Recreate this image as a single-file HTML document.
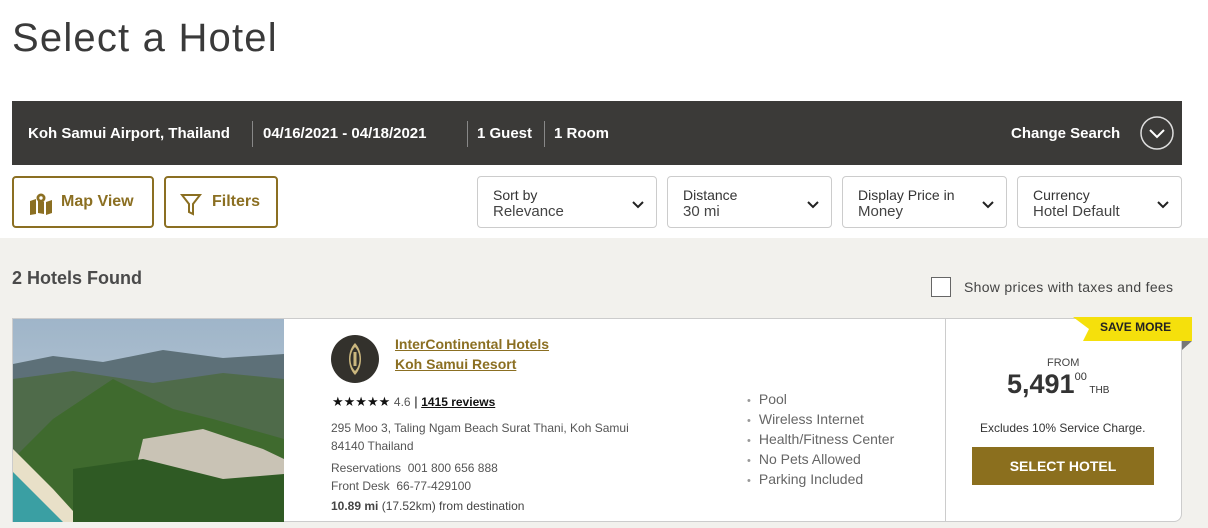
<!DOCTYPE html><html><head><style>
*{margin:0;padding:0;box-sizing:border-box}
body{width:1208px;height:528px;overflow:hidden;background:#fff;font-family:"Liberation Sans",sans-serif;color:#333;position:relative}
.a{position:absolute}
h1{position:absolute;left:12px;top:16px;font-size:40px;font-weight:400;color:#3a3a3a;letter-spacing:1.2px}
.bar{left:12px;top:101px;width:1170px;height:64px;background:#3b3a38;color:#fff;font-size:15px;font-weight:bold}
.bar span{position:absolute;top:24px}
.sep{position:absolute;top:20px;width:1px;height:26px;background:#888}
.btn{top:176px;height:52px;border:2px solid #8b6f22;border-radius:4px;color:#8b6f22;font-weight:bold;font-size:16px}
.sel{top:176px;height:52px;border:1px solid #ccc;border-radius:4px;background:#fff}
.sel b{position:absolute;left:15px;top:10px;font-size:14px;font-weight:normal;color:#333}
.sel i{position:absolute;left:15px;top:26px;font-size:15px;font-style:normal;color:#444}
.sel svg{position:absolute;right:12px;top:24px}
.gray{left:0;top:238px;width:1208px;height:290px;background:#f2f1ed}
.card{left:12px;top:318px;width:1170px;height:204px;background:#fff;border:1px solid #ccc;border-radius:0 0 8px 0}
.gold{color:#8b6f22;text-decoration:underline;font-weight:bold;font-size:14px}
.sm{font-size:12px;color:#555}
li{font-size:14px;color:#666;margin-bottom:4px;list-style:none}
li:before{content:"•";color:#999;margin-right:8px;font-size:11px}
</style></head><body>
<h1>Select a Hotel</h1>
<div class="a bar">
<span style="left:16px">Koh Samui Airport, Thailand</span><div class="sep" style="left:240px"></div>
<span style="left:251px">04/16/2021 - 04/18/2021</span><div class="sep" style="left:455px"></div>
<span style="left:465px">1 Guest</span><div class="sep" style="left:532px"></div>
<span style="left:542px">1 Room</span>
<span style="left:999px">Change Search</span>
<svg class="a" style="left:1128px;top:15px" width="34" height="34"><circle cx="17" cy="17" r="16" fill="none" stroke="#ddd" stroke-width="1.5"/><path d="M10 14l7 7 7-7" fill="none" stroke="#fff" stroke-width="2"/></svg>
</div>
<div class="a btn" style="left:12px;width:142px"><svg class="a" style="left:15px;top:15px" width="24" height="22"><path d="M1 8l6-2v15l-6 1zM9 6l6 3v12l-6-1zM17 9l6-2v13l-6 2z" fill="#8b6f22"/><circle cx="12" cy="5" r="4.5" fill="#8b6f22"/><circle cx="12" cy="5" r="1.7" fill="#fff"/></svg><span class="a" style="left:47px;top:15px">Map View</span></div>
<div class="a btn" style="left:164px;width:114px"><svg class="a" style="left:14px;top:15px" width="22" height="24"><path d="M2 2h18l-7 9v10l-4-2v-8z" fill="none" stroke="#8b6f22" stroke-width="2"/></svg><span class="a" style="left:46px;top:15px">Filters</span></div>
<div class="a sel" style="left:477px;width:180px"><b>Sort by</b><i>Relevance</i><svg width="12" height="8"><path d="M1 1l5 5 5-5" fill="none" stroke="#222" stroke-width="2"/></svg></div>
<div class="a sel" style="left:667px;width:165px"><b>Distance</b><i>30 mi</i><svg width="12" height="8"><path d="M1 1l5 5 5-5" fill="none" stroke="#222" stroke-width="2"/></svg></div>
<div class="a sel" style="left:842px;width:165px"><b>Display Price in</b><i>Money</i><svg width="12" height="8"><path d="M1 1l5 5 5-5" fill="none" stroke="#222" stroke-width="2"/></svg></div>
<div class="a sel" style="left:1017px;width:165px"><b>Currency</b><i>Hotel Default</i><svg width="12" height="8"><path d="M1 1l5 5 5-5" fill="none" stroke="#222" stroke-width="2"/></svg></div>
<div class="a gray"></div>
<div class="a" style="left:12px;top:268px;font-size:18px;color:#444;font-weight:bold;color:#4a4a4a">2 Hotels Found</div>
<div class="a" style="left:931px;top:277px;width:20px;height:20px;border:1px solid #666;background:#fff"></div>
<div class="a" style="left:964px;top:279px;font-size:14px;color:#444;letter-spacing:.3px">Show prices with taxes and fees</div>
<div class="a card">
<svg class="a" style="left:0;top:0" width="271" height="203"><defs><linearGradient id="s" x1="0" y1="0" x2="0" y2="1"><stop offset="0" stop-color="#9fb5c9"/><stop offset="1" stop-color="#c9d3da"/></linearGradient></defs><rect width="271" height="203" fill="url(#s)"/><path d="M0 45l40-8 50 6 60-12 60 8 61-4v80H0z" fill="#5d7078"/><path d="M0 60l60-8 80 12 70-10 61 6v100H0z" fill="#4f6b4a"/><path d="M0 140l40-40 60-40 60 30 40 10 71 20v83H0z" fill="#3f6a2e"/><path d="M130 120l60-10 60 20 21 10v63H110z" fill="#c9c3b5"/><path d="M0 140l30 30 40 33H0z" fill="#3a9fa3"/><path d="M0 130l40 40 30 33H50l-50-50z" fill="#e8e0c8"/><path d="M60 150l70-10 80 20 61-5v48H60z" fill="#2f5a24"/></svg>
<div class="a" style="left:318px;top:16px;width:48px;height:48px;border-radius:50%;background:#33312c"></div>
<svg class="a" style="left:332px;top:22px" width="20" height="36"><path d="M10 2C2 10 2 26 10 34 18 26 18 10 10 2z" fill="#cbb77e"/><path d="M10 6C4 12 4 24 10 30 16 24 16 12 10 6z" fill="#33312c"/><rect x="8.5" y="11" width="3" height="14" fill="#cbb77e"/></svg>
<div class="a gold" style="left:382px;top:17px">InterContinental Hotels</div>
<div class="a gold" style="left:382px;top:37px">Koh Samui Resort</div>
<div class="a" style="left:319px;top:75px;font-size:13px;color:#111">★★★★★ <span style="color:#555;font-size:12px">4.6</span> | <span style="text-decoration:underline;font-weight:bold;font-size:12px">1415 reviews</span></div>
<div class="a sm" style="left:318px;top:100px;line-height:18px">295 Moo 3, Taling Ngam Beach Surat Thani, Koh Samui<br>84140 Thailand</div>
<div class="a sm" style="left:318px;top:140px;line-height:18px">Reservations&nbsp; 001 800 656 888<br>Front Desk&nbsp; 66-77-429100</div>
<div class="a sm" style="left:318px;top:180px;color:#444"><b>10.89 mi</b> (17.52km) from destination</div>
<ul class="a" style="left:734px;top:72px"><li>Pool</li><li>Wireless Internet</li><li>Health/Fitness Center</li><li>No Pets Allowed</li><li>Parking Included</li></ul>
<div class="a" style="left:932px;top:-1px;width:1px;height:204px;background:#ccc"></div>
</div>
<svg class="a" style="left:1073px;top:317px" width="120" height="36"><path d="M0 0h119v24H10l6-12z" fill="#f5e00c"/><path d="M109 24h10l-10 9z" fill="#777"/></svg>
<div class="a" style="left:1100px;top:320px;font-size:12px;font-weight:bold;color:#222">SAVE MORE</div>
<div class="a" style="left:1047px;top:357px;font-size:11px;color:#444">FROM</div>
<div class="a" style="left:1007px;top:369px;font-size:27px;font-weight:bold;color:#333">5,491<sup style="font-size:11px;font-weight:normal;vertical-align:13px">00</sup><span style="font-size:10px;font-weight:normal"> THB</span></div>
<div class="a" style="left:980px;top:421px;font-size:12px;color:#333">Excludes 10% Service Charge.</div>
<div class="a" style="left:972px;top:447px;width:182px;height:38px;background:#8b6f1e;color:#fff;font-weight:bold;font-size:14px;text-align:center;line-height:38px">SELECT HOTEL</div>
</body></html>
